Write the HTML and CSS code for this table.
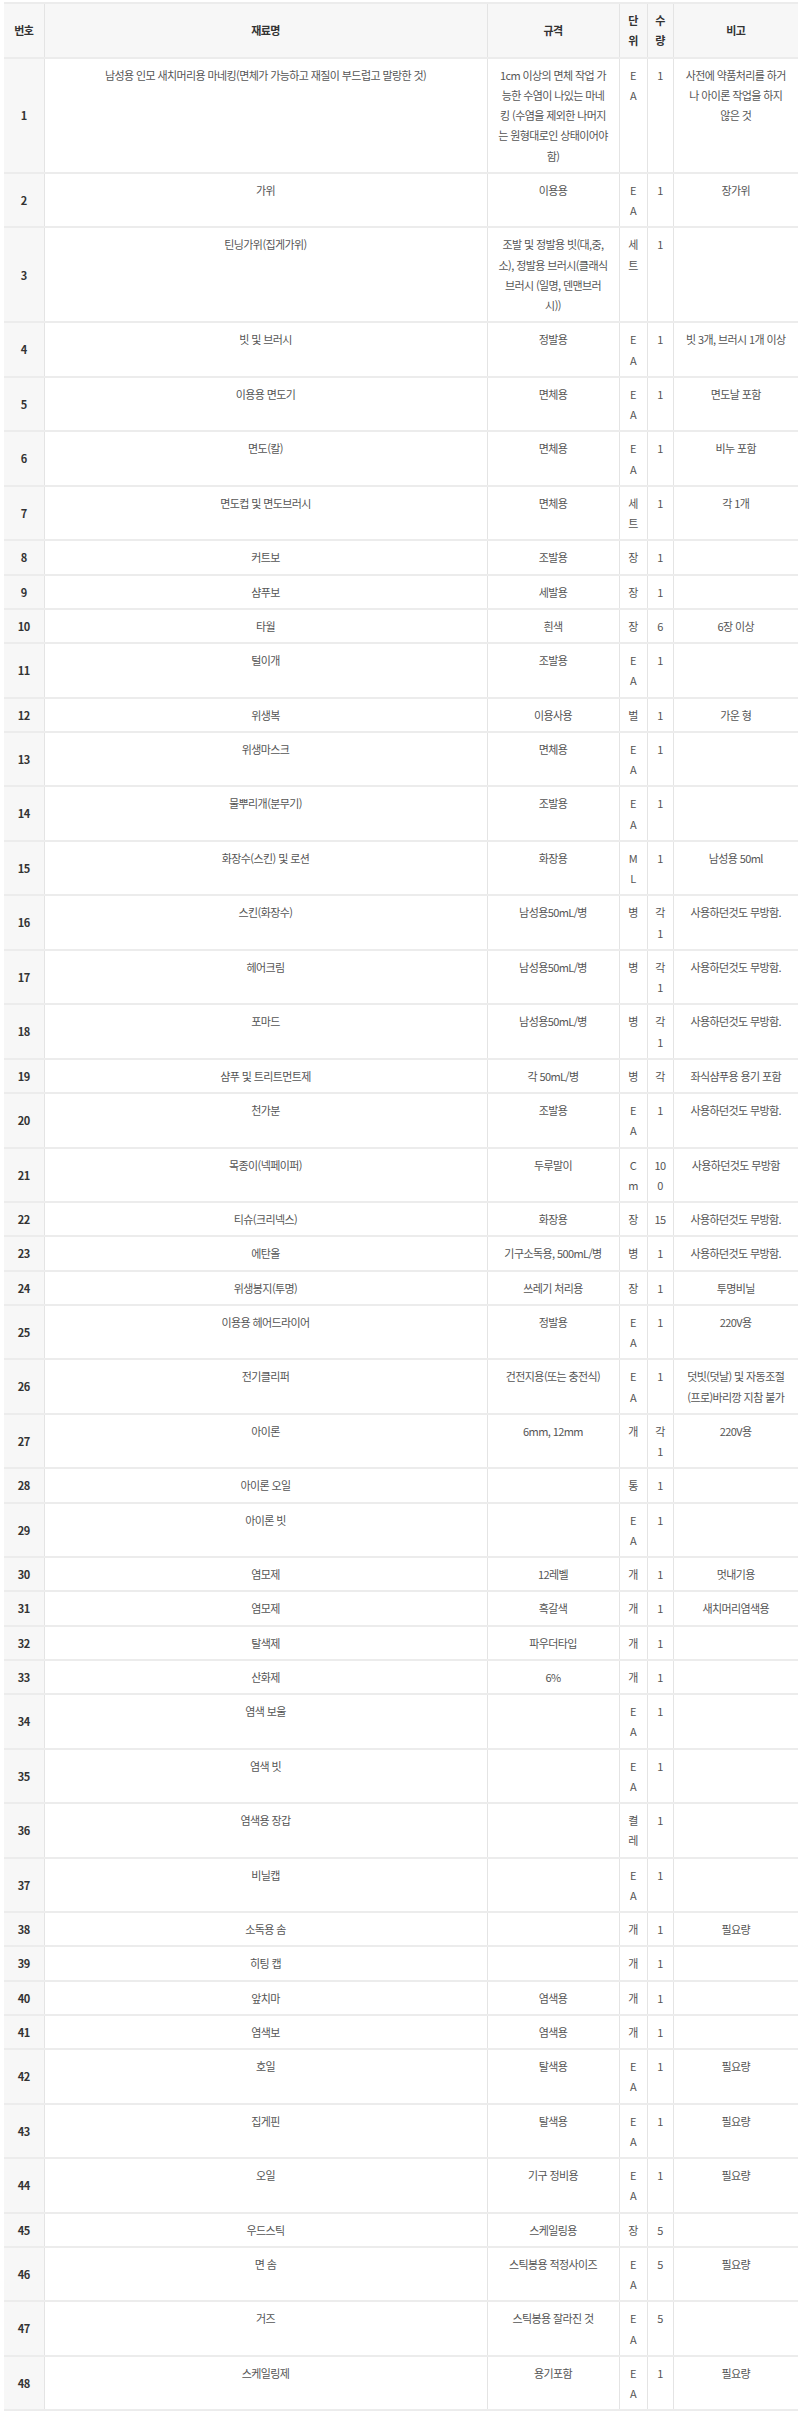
FILE: index.html
```html
<!DOCTYPE html>
<html lang="ko">
<head>
<meta charset="utf-8">
<title>재료 목록</title>
<link rel="stylesheet" href="styles.css">
</head>
<body>
<table class="spec-table">
  <colgroup>
    <col class="c-no"><col class="c-name"><col class="c-spec"><col class="c-unit"><col class="c-qty"><col class="c-note">
  </colgroup>
  <thead>
    <tr><th>번호</th><th>재료명</th><th>규격</th><th>단<br>위</th><th>수<br>량</th><th>비고</th></tr>
  </thead>
  <tbody>
    <tr><td class="no">1</td><td>남성용 인모 새치머리용 마네킹(면체가 가능하고 재질이 부드럽고 말랑한 것)</td><td>1cm 이상의 면체 작업 가<br>능한 수염이 나있는 마네<br>킹 (수염을 제외한 나머지<br>는 원형대로인 상태이어야<br>함)</td><td>E<br>A</td><td>1</td><td>사전에 약품처리를 하거<br>나 아이론 작업을 하지<br>않은 것</td></tr>
    <tr><td class="no">2</td><td>가위</td><td>이용용</td><td>E<br>A</td><td>1</td><td>장가위</td></tr>
    <tr><td class="no">3</td><td>틴닝가위(집게가위)</td><td>조발 및 정발용 빗(대,중,<br>소), 정발용 브러시(클래식<br>브러시 (일명, 덴맨브러<br>시))</td><td>세<br>트</td><td>1</td><td></td></tr>
    <tr><td class="no">4</td><td>빗 및 브러시</td><td>정발용</td><td>E<br>A</td><td>1</td><td>빗 3개, 브러시 1개 이상</td></tr>
    <tr><td class="no">5</td><td>이용용 면도기</td><td>면체용</td><td>E<br>A</td><td>1</td><td>면도날 포함</td></tr>
    <tr><td class="no">6</td><td>면도(칼)</td><td>면체용</td><td>E<br>A</td><td>1</td><td>비누 포함</td></tr>
    <tr><td class="no">7</td><td>면도컵 및 면도브러시</td><td>면체용</td><td>세<br>트</td><td>1</td><td>각 1개</td></tr>
    <tr><td class="no">8</td><td>커트보</td><td>조발용</td><td>장</td><td>1</td><td></td></tr>
    <tr><td class="no">9</td><td>샴푸보</td><td>세발용</td><td>장</td><td>1</td><td></td></tr>
    <tr><td class="no">10</td><td>타월</td><td>흰색</td><td>장</td><td>6</td><td>6장 이상</td></tr>
    <tr><td class="no">11</td><td>털이개</td><td>조발용</td><td>E<br>A</td><td>1</td><td></td></tr>
    <tr><td class="no">12</td><td>위생복</td><td>이용사용</td><td>벌</td><td>1</td><td>가운 형</td></tr>
    <tr><td class="no">13</td><td>위생마스크</td><td>면체용</td><td>E<br>A</td><td>1</td><td></td></tr>
    <tr><td class="no">14</td><td>물뿌리개(분무기)</td><td>조발용</td><td>E<br>A</td><td>1</td><td></td></tr>
    <tr><td class="no">15</td><td>화장수(스킨) 및 로션</td><td>화장용</td><td>M<br>L</td><td>1</td><td>남성용 50ml</td></tr>
    <tr><td class="no">16</td><td>스킨(화장수)</td><td>남성용50mL/병</td><td>병</td><td>각<br>1</td><td>사용하던것도 무방함.</td></tr>
    <tr><td class="no">17</td><td>헤어크림</td><td>남성용50mL/병</td><td>병</td><td>각<br>1</td><td>사용하던것도 무방함.</td></tr>
    <tr><td class="no">18</td><td>포마드</td><td>남성용50mL/병</td><td>병</td><td>각<br>1</td><td>사용하던것도 무방함.</td></tr>
    <tr><td class="no">19</td><td>샴푸 및 트리트먼트제</td><td>각 50mL/병</td><td>병</td><td>각</td><td>좌식샴푸용 용기 포함</td></tr>
    <tr><td class="no">20</td><td>천가분</td><td>조발용</td><td>E<br>A</td><td>1</td><td>사용하던것도 무방함.</td></tr>
    <tr><td class="no">21</td><td>목종이(넥페이퍼)</td><td>두루말이</td><td>C<br>m</td><td>10<br>0</td><td>사용하던것도 무방함</td></tr>
    <tr><td class="no">22</td><td>티슈(크리넥스)</td><td>화장용</td><td>장</td><td>15</td><td>사용하던것도 무방함.</td></tr>
    <tr><td class="no">23</td><td>에탄올</td><td>기구소독용, 500mL/병</td><td>병</td><td>1</td><td>사용하던것도 무방함.</td></tr>
    <tr><td class="no">24</td><td>위생봉지(투명)</td><td>쓰레기 처리용</td><td>장</td><td>1</td><td>투명비닐</td></tr>
    <tr><td class="no">25</td><td>이용용 헤어드라이어</td><td>정발용</td><td>E<br>A</td><td>1</td><td>220V용</td></tr>
    <tr><td class="no">26</td><td>전기클리퍼</td><td>건전지용(또는 충전식)</td><td>E<br>A</td><td>1</td><td>덧빗(덧날) 및 자동조절<br>(프로)바리깡 지참 불가</td></tr>
    <tr><td class="no">27</td><td>아이론</td><td>6mm, 12mm</td><td>개</td><td>각<br>1</td><td>220V용</td></tr>
    <tr><td class="no">28</td><td>아이론 오일</td><td></td><td>통</td><td>1</td><td></td></tr>
    <tr><td class="no">29</td><td>아이론 빗</td><td></td><td>E<br>A</td><td>1</td><td></td></tr>
    <tr><td class="no">30</td><td>염모제</td><td>12레벨</td><td>개</td><td>1</td><td>멋내기용</td></tr>
    <tr><td class="no">31</td><td>염모제</td><td>흑갈색</td><td>개</td><td>1</td><td>새치머리염색용</td></tr>
    <tr><td class="no">32</td><td>탈색제</td><td>파우더타입</td><td>개</td><td>1</td><td></td></tr>
    <tr><td class="no">33</td><td>산화제</td><td>6%</td><td>개</td><td>1</td><td></td></tr>
    <tr><td class="no">34</td><td>염색 보울</td><td></td><td>E<br>A</td><td>1</td><td></td></tr>
    <tr><td class="no">35</td><td>염색 빗</td><td></td><td>E<br>A</td><td>1</td><td></td></tr>
    <tr><td class="no">36</td><td>염색용 장갑</td><td></td><td>켤<br>레</td><td>1</td><td></td></tr>
    <tr><td class="no">37</td><td>비닐캡</td><td></td><td>E<br>A</td><td>1</td><td></td></tr>
    <tr><td class="no">38</td><td>소독용 솜</td><td></td><td>개</td><td>1</td><td>필요량</td></tr>
    <tr><td class="no">39</td><td>히팅 캡</td><td></td><td>개</td><td>1</td><td></td></tr>
    <tr><td class="no">40</td><td>앞치마</td><td>염색용</td><td>개</td><td>1</td><td></td></tr>
    <tr><td class="no">41</td><td>염색보</td><td>염색용</td><td>개</td><td>1</td><td></td></tr>
    <tr><td class="no">42</td><td>호일</td><td>탈색용</td><td>E<br>A</td><td>1</td><td>필요량</td></tr>
    <tr><td class="no">43</td><td>집게핀</td><td>탈색용</td><td>E<br>A</td><td>1</td><td>필요량</td></tr>
    <tr><td class="no">44</td><td>오일</td><td>기구 정비용</td><td>E<br>A</td><td>1</td><td>필요량</td></tr>
    <tr><td class="no">45</td><td>우드스틱</td><td>스케일링용</td><td>장</td><td>5</td><td></td></tr>
    <tr><td class="no">46</td><td>면 솜</td><td>스틱봉용 적정사이즈</td><td>E<br>A</td><td>5</td><td>필요량</td></tr>
    <tr><td class="no">47</td><td>거즈</td><td>스틱봉용 잘라진 것</td><td>E<br>A</td><td>5</td><td></td></tr>
    <tr><td class="no">48</td><td>스케일링제</td><td>용기포함</td><td>E<br>A</td><td>1</td><td>필요량</td></tr>
  </tbody>
</table>
</body>
</html>
```

FILE: styles.css
```css
html, body {
  margin: 0;
  padding: 0;
  background: #ffffff;
}

body {
  font-family: "Noto Sans CJK KR", "Noto Sans", sans-serif;
}

.spec-table {
  margin: 2px 0 0 4px;
  width: 794px;
  table-layout: fixed;
  border-collapse: collapse;
  font-size: 11px;
  letter-spacing: -0.6px;
  line-height: 20.25px;
  color: #555555;
}

.c-no { width: 40px; }
.c-name { width: 443px; }
.c-spec { width: 132px; }
.c-unit { width: 28px; }
.c-qty { width: 26px; }
.c-note { width: 125px; }

.spec-table th,
.spec-table td {
  border-left: 1px solid #e4e4e4;
  border-right: 1px solid #e4e4e4;
  border-top: 2px solid #ececec;
  border-bottom: 2px solid #ececec;
  padding: 6px 2px;
  text-align: center;
  vertical-align: top;
  font-weight: 400;
}

.spec-table th:first-child,
.spec-table td:first-child {
  border-left: none;
}

.spec-table th:last-child,
.spec-table td:last-child {
  border-right: none;
}

.spec-table th {
  background: #f7f7f7;
  color: #333333;
  font-weight: 700;
  vertical-align: middle;
}

.spec-table td.no {
  background: #f7f7f7;
  color: #333333;
  font-weight: 700;
  vertical-align: middle;
}
```
